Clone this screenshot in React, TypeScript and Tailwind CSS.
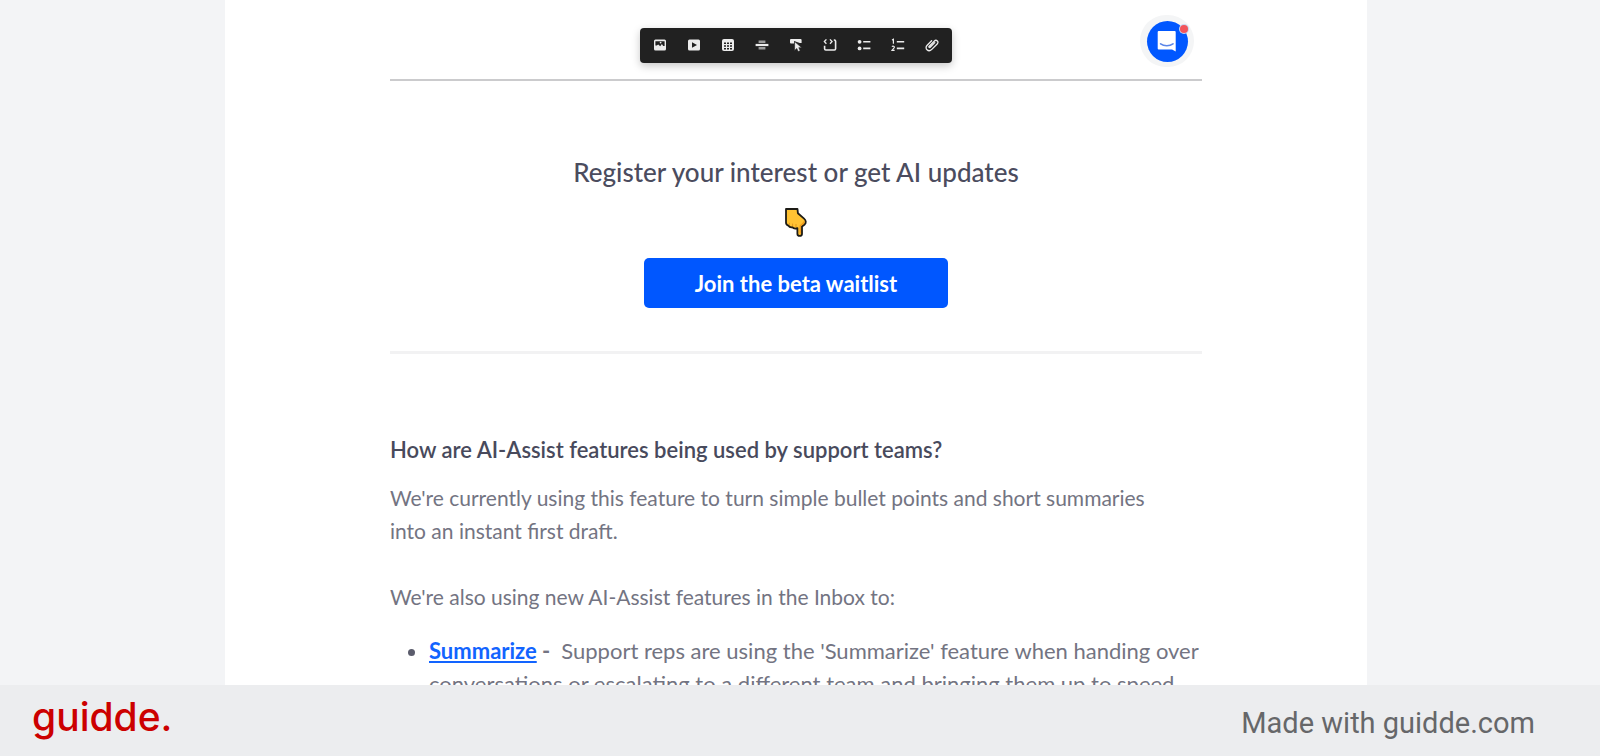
import React from 'react';
import clsx from 'clsx';

interface ToolProps {
  label: string;
  children: React.ReactNode;
}

const Tool: React.FC<ToolProps> = ({ label, children }) => (
  <button type="button" aria-label={label} className="w-[34px] h-full pb-0.5 flex items-center justify-center text-[#ececec]">
    <svg width="14" height="14" viewBox="0 0 14 14" fill="none" stroke="currentColor" strokeWidth="1.4">
      {children}
    </svg>
  </button>
);

const Toolbar: React.FC = () => (
  <div className="flex h-[35px] px-[3px] rounded-[4px] bg-[#212121] shadow-[0_3px_9px_rgba(0,0,0,0.22)]">
    <Tool label="Image">
      <rect x="1" y="1.5" width="12" height="11" rx="1.5" fill="currentColor" stroke="none" />
      <path d="M2.4 3.2h9.200v4.800h-1.400l-1.300-2-1.700 2.200-2-1.800-1.400 1.200H2.400z" fill="#212121" stroke="none" />
      <circle cx="7.600" cy="4.600" r=".9" fill="currentColor" stroke="none" />
    </Tool>
    <Tool label="Video">
      <rect x="1" y="1.5" width="12" height="11" rx="1.5" fill="currentColor" stroke="none" />
      <path d="M5 4.200v5.600L10 7z" fill="#212121" stroke="none" />
    </Tool>
    <Tool label="Table">
      <rect x="1" y="1" width="12" height="12" rx="2" fill="currentColor" stroke="none" />
      <path d="M3 5.200h2M6 5.200h2M9 5.200h2M3 8h2M6 8h2M9 8h2M3 10.800h2M6 10.800h2M9 10.800h2" stroke="#212121" strokeWidth="1.600" />
    </Tool>
    <Tool label="Divider">
      <path d="M.6 7h12.800" strokeWidth="2.200" />
      <path d="M3.600 3.800h6.800M3.600 10.200h6.800" strokeWidth="2.400" opacity=".6" />
    </Tool>
    <Tool label="Button">
      <path d="M2 1h9.600a1 1 0 0 1 1 1v3h-1.800L5 3v2.600H2a1 1 0 0 1-1-1V2a1 1 0 0 1 1-1z" fill="currentColor" stroke="none" />
      <path d="M5.600 3.600v8.800l2.200-1.900 1.300 3.100 2.100-.9-1.400-3h3z" fill="currentColor" stroke="#212121" strokeWidth=".6" />
    </Tool>
    <Tool label="Code block">
      <path d="M3.400 1.400 1.400 3.600l2 2.200M7 1.400l2 2.200-2 2.200" />
      <path d="M10.800 2h.6a1.200 1.200 0 0 1 1.200 1.200v7.600a1.200 1.200 0 0 1-1.200 1.200H2.800a1.200 1.200 0 0 1-1.200-1.200V7.800" strokeWidth="1.600" />
    </Tool>
    <Tool label="Bullet list">
      <circle cx="2.600" cy="3.800" r="1.900" fill="currentColor" stroke="none" />
      <circle cx="2.600" cy="10.400" r="1.900" fill="currentColor" stroke="none" />
      <path d="M6.200 3.800h7.200M6.200 10.400h7.200" strokeWidth="1.600" />
    </Tool>
    <Tool label="Numbered list">
      <path d="M1 2l1.400-.7v4.400M.9 8.600c1-.9 2.600-.4 2.400.8-.2 1-1.600 1.600-2.300 2.900h2.600" strokeWidth="1.200" />
      <path d="M5.800 3.800h7.400M5.800 10.400h7.400" strokeWidth="1.600" />
    </Tool>
    <Tool label="Attachment">
      <path
        d="M9.800 4.600 5.200 9.200c-.8.800-1.800-.2-1-1l5-5c2.200-2.200 5.200.6 3 2.800l-5.400 5.400c-3.400 3.400-7.800-1-4.600-4.200L6.600 2.800"
        strokeWidth="1.300"
        strokeLinecap="round"
      />
    </Tool>
  </div>
);

const ChatLauncher: React.FC = () => (
  <button
    type="button"
    aria-label="Open chat"
    className="relative w-[54px] h-[52px] rounded-full bg-[#f4f5f6] flex items-center justify-center"
  >
    <span className="w-[41px] h-[41px] rounded-full bg-[#0057ff] flex items-center justify-center">
      <svg width="20" height="22" viewBox="0 0 20 22" fill="none">
        <path d="M1.700 1h16a1 1 0 0 1 1 1V21.500l-3.600-2H1.700a1 1 0 0 1-1-1V2a1 1 0 0 1 1-1z" fill="#fff" />
        <path d="M3.600 13.800c3.400 2.600 9 2.600 12.400 0" stroke="#5b86e8" strokeWidth="1.600" strokeLinecap="round" />
      </svg>
    </span>
    <span className="absolute top-[10px] right-[6px] w-2 h-2 rounded-full bg-[#f2545b] ring-1 ring-[#c9d6ee]" />
  </button>
);

const PointingHand: React.FC = () => (
  <svg width="24" height="31" viewBox="0 0 24 31" className="mx-auto" aria-hidden="true">
    <path
      d="M2 2h11.500l.4 4.200 6.200 5.400c2 1.700 2.200 4.200.6 5.900L18 19.500v7.200c0 3-4.600 3-4.600 0v-5.600c-2 .8-4.200.2-5.200-.9-1.700.3-3-.3-3.700-1.500C3.200 18.400 2 17.300 2 15.600z"
      fill="#ffc233"
      stroke="#1d1b16"
      strokeWidth="1.800"
      strokeLinejoin="round"
    />
    <path d="M15.600 18.500l2.400-1.900 2.400-3-.6 3.400-2.800 2v7.500h-1.400z" fill="#f09a1a" />
    <path d="M5.400 15.800v2M8.600 16.600v2.600M12 17v3" stroke="#e39a1c" strokeWidth="1" />
  </svg>
);

const Paragraph: React.FC<{ className?: string; children: React.ReactNode }> = ({ className, children }) => (
  <p className={clsx('text-[21px] leading-[33px]', className)}>{children}</p>
);

export default function App() {
  return (
    <div className="h-screen flex flex-col bg-[#f3f4f6] font-['Lato',sans-serif]">
      <main className="flex-1 min-h-0 overflow-hidden pl-[225px] pr-[233px]">
        <article className="min-h-full bg-white px-[165px] text-[22px] text-[#737482]">
          {/* Editor toolbar with chat launcher */}
          <div className="grid grid-cols-[1fr_auto_1fr] items-end h-[81px] pb-3 border-b-2 border-[#cbcbcd]">
            <div />
            <div className="pb-1">
              <Toolbar />
            </div>
            <div className="flex justify-end pr-2">
              <ChatLauncher />
            </div>
          </div>

          {/* Waitlist */}
          <section className="pt-[72px] pb-[43px] text-center border-b-[3px] border-[#f2f2f3]">
            <h2 className="text-[26px] leading-[38px] font-medium text-[#4b4c5e]">Register your interest or get AI updates</h2>
            <div className="pt-4 pb-5">
              <PointingHand />
            </div>
            <a
              href="#waitlist"
              className="inline-flex items-center justify-center w-[304px] h-[50px] rounded-[5px] bg-[#0057ff] text-white font-bold"
            >
              Join the beta waitlist
            </a>
          </section>

          <section className="pt-[79px]">
            <h3 className="leading-[33px] font-semibold text-[#484a5c]">
              How are AI-Assist features being used by support teams?
            </h3>
            <Paragraph className="pt-[15px]">
              We're currently using this feature to turn simple bullet points and short summaries
              <br />
              into an instant first draft.
            </Paragraph>
            <Paragraph className="pt-[33px]">We're also using new AI-Assist features in the Inbox to:</Paragraph>
            <ul className="pt-[21px] pl-[39px] list-disc leading-[33px] marker:text-[#5b5c6c]">
              <li>
                <a href="#summarize" className="font-bold text-[#1264ff] underline">Summarize</a>
                <b> - </b>&nbsp;Support reps are using the 'Summarize' feature when handing over
                <br />
                conversations or escalating to a different team and bringing them up to speed.
              </li>
            </ul>
          </section>
        </article>
      </main>

      <footer className="h-[71px] shrink-0 flex items-center justify-between pl-8 pr-[65px] bg-[#ecedef]">
        <a href="#guidde" className="font-['Inter',sans-serif] font-medium text-[39px] leading-[48px] pb-2 text-[#cc0000]">guidde.</a>
        <a href="#made-with" className="font-['Roboto',sans-serif] text-[29px] leading-9 pt-1 text-[#666769]">Made with guidde.com</a>
      </footer>
    </div>
  );
}
